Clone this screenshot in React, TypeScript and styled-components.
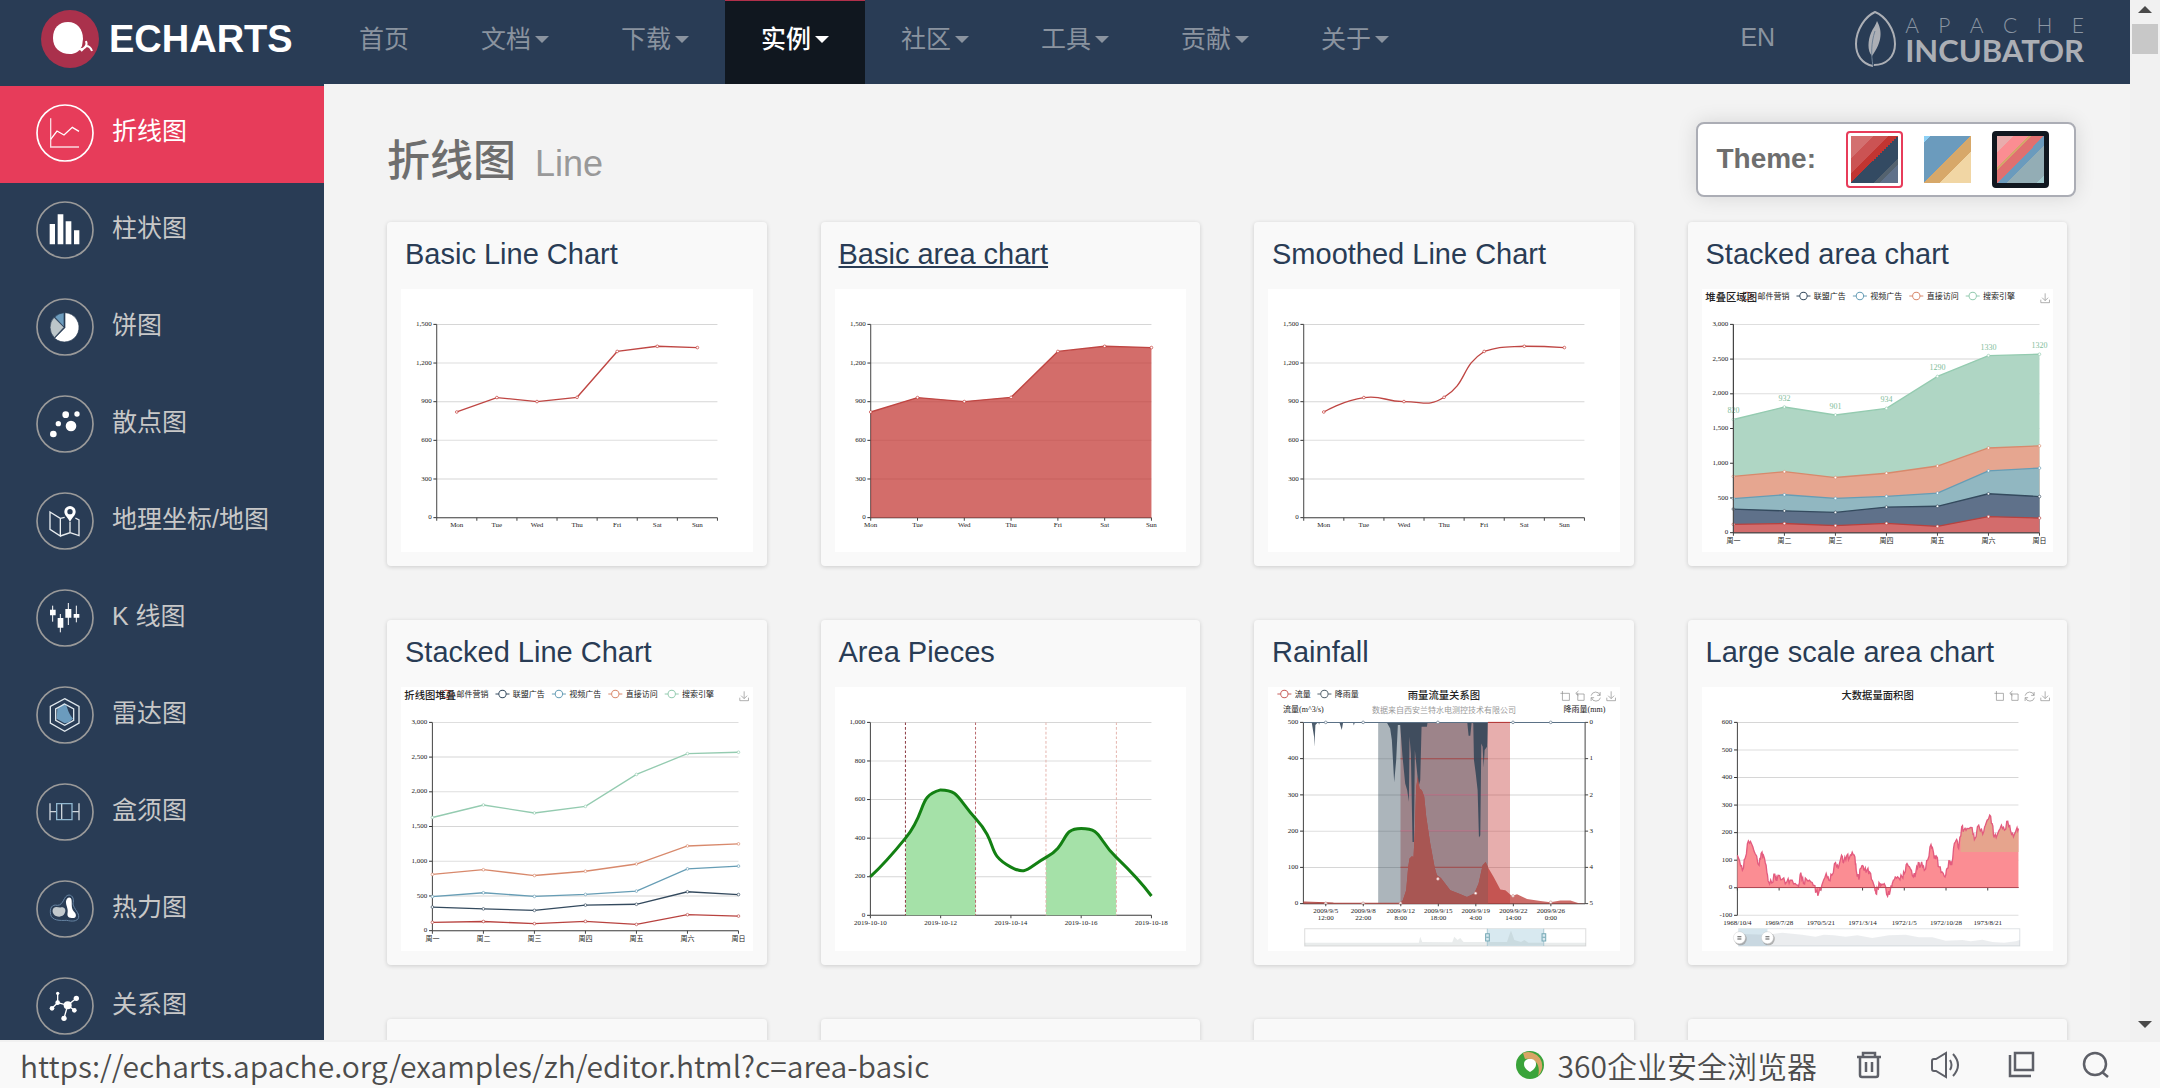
import React from 'react';
import styled, { createGlobalStyle } from 'styled-components';

const SANS = '"Liberation Sans", "Noto Sans CJK SC", sans-serif';
const SERIF = '"Liberation Serif", "Noto Sans CJK SC", serif';

const GlobalStyle = createGlobalStyle`
  * { box-sizing: border-box; }
  body { margin: 0; font-family: ${SANS}; background: #f3f3f3; }
  a { color: inherit; text-decoration: none; }
  button { font: inherit; border: 0; padding: 0; background: none; }
  ul { margin: 0; padding: 0; list-style: none; }
`;

/* ---------- page frame ---------- */

const Browser = styled.div`
  display: flex;
  flex-direction: column;
  height: 100vh;
  overflow: hidden;
`;
const Viewport = styled.div`
  display: flex;
  flex: 1;
  min-height: 0;
`;
const Site = styled.div`
  display: flex;
  flex: 1;
  flex-direction: column;
  min-width: 0;
`;
const Body = styled.div`
  display: flex;
  flex: 1;
  min-height: 0;
`;

/* ---------- top bar ---------- */

const Header = styled.header`
  display: flex;
  flex: none;
  height: 84px;
  padding: 0 46px 0 41px;
  background: #293c55;
`;
const Logo = styled.a`
  display: flex;
  align-items: center;
  gap: 10px;
  width: 282px;
  padding-bottom: 6px;
  color: #fff;
  font: 700 38px/44px "Liberation Sans", sans-serif;
`;
const Nav = styled.nav`
  display: flex;
  flex: 1;
`;
const NavLink = styled.a<{ $active?: boolean }>`
  display: flex;
  align-items: center;
  gap: 4px;
  padding: 0 36px 11px;
  border-top: 1px solid ${p => (p.$active ? '#b0304a' : 'transparent')};
  background: ${p => (p.$active ? '#10171f' : 'transparent')};
  color: ${p => (p.$active ? '#fff' : '#8a939f')};
  font-size: 25px;
  font-weight: ${p => (p.$active ? 500 : 400)};
`;
const Caret = styled.span`
  border: 7px solid transparent;
  border-top-color: currentColor;
  border-bottom: 0;
  margin-top: 5px;
`;
const Incubator = styled.a`
  display: flex;
  align-items: center;
  gap: 9px;
  margin-left: 44px;
  padding-bottom: 6px;
  color: #acafb5;
  font-family: Lato, sans-serif;
`;
const IncubatorWords = styled.span`
  display: flex;
  flex-direction: column;
  font: 700 31px/28px Lato, sans-serif;
`;
const Tracked = styled.span`
  display: flex;
  justify-content: space-between;
  color: #8b96a3;
  font: 300 21px/22px Lato, sans-serif;
`;

/* ---------- side bar ---------- */

const Sidebar = styled.aside`
  flex: none;
  width: 324px;
  padding-top: 2px;
  overflow: hidden;
  background: #293c55;
`;
const SideLink = styled.a<{ $active?: boolean }>`
  display: flex;
  align-items: center;
  gap: 18px;
  height: 97px;
  padding: 0 36px 4px;
  background: ${p => (p.$active ? '#e73c5a' : 'transparent')};
  color: ${p => (p.$active ? '#fff' : '#c8c8c8')};
  font-size: 25px;
  line-height: 30px;
`;
const SideLabel = styled.span`
  padding-bottom: 3px;
`;

/* ---------- gallery ---------- */

const Main = styled.main`
  flex: 1;
  min-width: 0;
  padding: 38px 63px 0;
  overflow: hidden;
  background: #f3f3f3;
`;
const TitleRow = styled.div`
  display: flex;
  align-items: center;
  justify-content: space-between;
  margin: 0 -9px 25px 0;
`;
const Title = styled.h1`
  display: flex;
  align-items: baseline;
  gap: 19px;
  margin: 0;
  padding-top: 6px;
  color: #6e6e6e;
  font-size: 43px;
  font-weight: 500;
  line-height: 60px;
`;
const SubTitle = styled.small`
  color: #999;
  font-size: 36px;
  font-weight: 400;
`;
const ThemePanel = styled.div`
  display: flex;
  align-items: center;
  gap: 16px;
  height: 75px;
  padding: 0 25px 0 18px;
  border: 2px solid #abadb5;
  border-radius: 8px;
  background: #fff;
  box-shadow: 0 0 20px rgba(0, 0, 0, 0.12);
`;
const ThemeLabel = styled.span`
  margin-right: 14px;
  padding-bottom: 2px;
  color: #6e6e6e;
  font-size: 28px;
  font-weight: 700;
`;
const Swatch = styled.button<{ $stops: string; $ring: string; $pad: string }>`
  width: 57px;
  height: 57px;
  padding: 3px;
  border: 2px solid ${p => p.$ring};
  border-radius: 4px;
  background: ${p => p.$pad};
  &::before {
    content: '';
    display: block;
    height: 100%;
    background: linear-gradient(to bottom right, ${p => p.$stops});
  }
`;
const Grid = styled.div`
  display: grid;
  grid-template-columns: repeat(4, minmax(0, 1fr));
  gap: 54px;
`;
const Card = styled.a`
  display: block;
  min-height: 344px;
  padding: 14px;
  border-radius: 4px;
  background: #f9f9f9;
  box-shadow: 0 1px 4px rgba(0, 0, 0, 0.16);
  color: #293c55;
`;
const CardTitle = styled.h4<{ $underlined?: boolean }>`
  margin: 0 4px 17px;
  font-size: 29px;
  font-weight: 400;
  line-height: 36px;
  text-decoration: ${p => (p.$underlined ? 'underline' : 'none')};
`;
const Thumb = styled.svg`
  display: block;
  width: 100%;
  background: #fff;
  font-family: ${SERIF};
  fill: #222;
`;

/* ---------- browser chrome ---------- */

const Scrollbar = styled.div`
  display: flex;
  flex: none;
  flex-direction: column;
  align-items: center;
  width: 30px;
  padding: 6px 0 12px;
  background: #f1f1f1;
`;
const Arrow = styled.span<{ $down?: boolean }>`
  border: 7px solid transparent;
  ${p => (p.$down ? 'border-top-color: #4a4a4a; border-bottom: 0; margin-top: auto;' : 'border-bottom-color: #4a4a4a; border-top: 0;')}
`;
const ScrollThumb = styled.span`
  width: 26px;
  height: 30px;
  margin-top: 11px;
  background: #c8c8c8;
`;
const StatusBar = styled.footer`
  display: flex;
  flex: none;
  align-items: center;
  height: 48px;
  padding: 0 50px 0 20px;
  border-top: 2px solid #f1f1f1;
  background: #f9f9f9;
  color: #4c4c4c;
  font: 400 30px/44px "Noto Sans CJK SC", sans-serif;
  font-weight: 350;
`;
const StatusUrl = styled.span`
  flex: 1;
`;
const BrandName = styled.span`
  margin: 0 38px 0 14px;
`;
const ToolGroup = styled.div`
  display: flex;
  gap: 47px;
`;
const ToolButton = styled.button`
  display: flex;
  color: #5e6068;
`;

/* ---------- drawings: side bar icons ---------- */

const icons: Record<string, React.ReactNode> = {
  line: (
    <g fill="none" stroke="#fff" strokeWidth="4">
      <path d="M44 43V129H129" opacity=".8" />
      <path d="M44 106 63 81 84 93 109 70 129 82" />
    </g>
  ),
  bar: <path fill="#fff" d="M41 69h16v61H41zM65 40h17v90H65zM89 61h17v69H89zM114 88h16v42h-16z" />,
  pie: (
    <g stroke="#293c55" strokeWidth="2">
      <path fill="#fff" d="M87 89V44A44 44 0 1 1 56 121Z" />
      <path fill="#bcc6ca" d="M84 88 55 119A44 44 0 0 1 54 58Z" />
      <path fill="#6b9bbd" d="M84 87 56 57A44 44 0 0 1 84 44Z" />
    </g>
  ),
  scatter: (
    <g fill="#fff">
      <circle cx="89" cy="59" r="10" />
      <circle cx="123" cy="57" r="8" />
      <circle cx="67" cy="86" r="8" />
      <circle cx="105" cy="93" r="16" />
      <circle cx="52" cy="117" r="10" />
    </g>
  ),
  map: (
    <g fill="none" stroke="#e8ecef" strokeWidth="4">
      <path d="M42 60 73 79V132L42 112ZM73 79 86 76M73 132 102 122V90M102 122 129 131V84L118 78" />
      <path fill="#fff" fillRule="evenodd" stroke="none" d="M102 90C96 76 85 70 85 59a17 17 0 0 1 34 0c0 11-11 17-17 31ZM102 51a8 8 0 1 0 0 16 8 8 0 0 0 0-16Z" />
    </g>
  ),
  k: (
    <g stroke="#fff" strokeWidth="3" fill="#fff">
      <path d="M50 50V98M73 75V130M97 42V108M121 50V100" />
      <path stroke="none" d="M42 62h17v17H42zM65 87h17v29H65zM88 60h18v26H88zM113 75h17v11h-17z" />
    </g>
  ),
  radar: (
    <g fill="none" stroke="#dfe7ec" strokeWidth="4">
      <path stroke="none" fill="#6b9bbd" d="M84 52C96 56 92 78 111 98L99 109 86 112 62 98 64 68Z" />
      <path d="M86 38 129 61V111L86 136 43 111V61ZM86 54 113 69V103L86 118 59 103V69Z" />
    </g>
  ),
  box: (
    <g fill="none" stroke="#cfd6dc" strokeWidth="4">
      <path d="M42 61V112M129 61V112M42 86H62M108 86H129M77 62V110" />
      <path stroke="#8fb6cf" d="M62 62H108V110H62Z" />
    </g>
  ),
  heat: (
    <g>
      <path fill="none" stroke="#6684a3" strokeWidth="3" d="M99 45C112 46 114 60 111 72 114 88 130 98 128 112 124 126 106 124 92 121 72 122 48 122 44 104 40 84 48 72 64 76 84 76 82 46 99 45Z" />
      <path fill="#c2c9cd" d="M53 84c7-6 16 0 24-2 10 0 14 8 9 18-4 10-16 12-26 8-9-4-14-16-7-24Z" />
      <path fill="#fff" d="M90 64c2-14 16-16 17-2 1 16-2 24 10 36 6 10 2 18-10 16-12-1-14-6-12-18 2-10-6-20-5-32Z" />
    </g>
  ),
  graph: (
    <g fill="#fff" stroke="#fff" strokeWidth="4">
      <path d="M65 49V77L48 94M65 77 95 85 121 64M115 100 95 85 84 124" fill="none" />
      <g stroke="none">
        <circle cx="65" cy="49" r="5" />
        <circle cx="65" cy="77" r="7" />
        <circle cx="48" cy="94" r="7" />
        <circle cx="95" cy="85" r="12" />
        <circle cx="121" cy="64" r="8" />
        <circle cx="115" cy="100" r="7" />
        <circle cx="84" cy="124" r="8" />
      </g>
    </g>
  ),
};

const SideIcon = ({ name, active }: { name: string; active?: boolean }) => (
  <svg width="58" height="58" viewBox="0 0 174 174">
    <circle cx="87" cy="87" r="84" fill="none" stroke={active ? '#fff' : '#9a9a9a'} strokeWidth="5" />
    {icons[name]}
  </svg>
);

/* ---------- drawings: thumbnails ---------- */

type Pt = [number, number];
const toPath = (pts: Pt[]) => 'M' + pts.map(p => p.join(' ')).join('L');

function smoothPath(pts: Pt[], k: number) {
  const ys = pts.map(p => p[1]);
  const lo = Math.min(...ys);
  const hi = Math.max(...ys);
  const clamp = (y: number) => Math.max(lo, Math.min(hi, y));
  const dist = (a: Pt, b: Pt) => Math.hypot(a[0] - b[0], a[1] - b[1]);
  let out = `M${pts[0].join(' ')}`;
  let before: Pt = pts[0];
  for (let i = 1; i < pts.length; i++) {
    const p = pts[i];
    const next = pts[i + 1];
    let enter: Pt = p;
    let leave: Pt = p;
    if (next) {
      const prev = pts[i - 1];
      const d0 = dist(prev, p);
      const d1 = dist(p, next);
      const v: Pt = [(next[0] - prev[0]) * k, (next[1] - prev[1]) * k];
      const r = d1 / (d0 + d1);
      enter = [p[0] - v[0] * (1 - r), clamp(p[1] - v[1] * (1 - r))];
      leave = [p[0] + v[0] * r, clamp(p[1] + v[1] * r)];
    }
    out += `C${before.join(' ')} ${enter.join(' ')} ${p.join(' ')}`;
    before = leave;
  }
  return out;
}

interface AxesProps {
  x0: number;
  x1: number;
  bottom: number;
  yLabels: string[];
  xLabels: string[];
  band?: boolean;
  labelY?: number;
  step?: number;
  xAxisY?: number;
}
const Axes = ({ x0, x1, bottom, yLabels, xLabels, band, labelY, step, xAxisY }: AxesProps) => {
  const top = 106;
  const dy = (bottom - top) / (yLabels.length - 1);
  const dx = step || (x1 - x0) / (band ? xLabels.length : xLabels.length - 1);
  const ay = xAxisY || bottom;
  const ticks = band ? xLabels.length + 1 : xLabels.length;
  return (
    <g fontSize="21">
      {yLabels.map((t, i) => (
        <g key={t}>
          <path d={`M${x0} ${bottom - i * dy}H${x1}`} stroke={i % 2 ? '#d6d6d6' : '#dedede'} strokeWidth="3" />
          <path d={`M${x0 - 10} ${bottom - i * dy}H${x0}`} stroke="#333" strokeWidth="3" />
          <text x={x0 - 15} y={bottom - i * dy + 5} textAnchor="end">{t}</text>
        </g>
      ))}
      <path d={`M${x0} ${top}V${bottom}M${x0} ${ay}H${x1}`} stroke="#444" strokeWidth="3" fill="none" />
      {Array.from({ length: ticks }, (_, i) => (
        <path key={i} d={`M${x0 + i * dx} ${ay}v9`} stroke="#444" strokeWidth="3" />
      ))}
      {xLabels.map((t, i) => (
        <text key={i} x={x0 + (i + (band ? 0.5 : 0)) * dx} y={labelY || bottom + 29} textAnchor="middle">{t}</text>
      ))}
    </g>
  );
};

const Dots = ({ pts, color }: { pts: Pt[]; color: string }) => (
  <g fill="#fff" stroke={color} strokeWidth="2">
    {pts.map((p, i) => <circle key={i} cx={p[0]} cy={p[1]} r="4" />)}
  </g>
);

const WEEK = ['Mon', 'Tue', 'Wed', 'Thu', 'Fri', 'Sat', 'Sun'];
const WEEK_ZH = ['周一', '周二', '周三', '周四', '周五', '周六', '周日'];
const VISITS = [820, 932, 901, 934, 1290, 1330, 1320];
const VISIT_AXIS = ['0', '300', '600', '900', '1,200', '1,500'];

const WeekChart = ({ kind }: { kind: 'line' | 'area' | 'smooth' }) => {
  const area = kind === 'area';
  const dx = 841 / (area ? 6 : 7);
  const pts = VISITS.map((v, i): Pt => [107 + dx * (i + (area ? 0 : 0.5)), 685 - (579 * v) / 1500]);
  return (
    <Thumb viewBox="0 0 1053 789">
      <Axes x0={107} x1={948} bottom={685} yLabels={VISIT_AXIS} xLabels={WEEK} band={!area} />
      {area && <path d={`${toPath(pts)}L948 685H107Z`} fill="#c23531" opacity=".72" />}
      <path d={kind === 'smooth' ? smoothPath(pts, 0.5) : toPath(pts)} fill="none" stroke="#bf4643" strokeWidth="4" />
      <Dots pts={pts} color="#c23531" />
    </Thumb>
  );
};

const Download = () => (
  <path d="M1028 13V34M1019 26 1028 35 1037 26M1015 32V41H1041V32" fill="none" stroke="#888" strokeWidth="2" />
);
const Toolbox = () => (
  <g fill="none" stroke="#888" strokeWidth="2">
    <path d="M882 12V40H903V19H876M928 19V40H947V21H924M930 12 922 19 930 26" />
    <path d="M968 26A14 14 0 0 1 995 25M996 32A14 14 0 0 1 969 32M995 15V25H986M968 42V32H977" />
    <Download />
  </g>
);
const LegendItem = ({ x, label, color }: { x: number; label: string; color: string }) => (
  <g>
    <path d={`M${x - 21} 21H${x + 21}`} stroke={color} strokeWidth="3" />
    <circle cx={x} cy="21" r="11" fill="#fff" stroke={color} strokeWidth="3" />
    <text x={x + 31} y="30" fontSize="24">{label}</text>
  </g>
);

const SERIES = [
  { name: '邮件营销', data: [120, 132, 101, 134, 90, 230, 210], line: '#b8423f', fill: '#d36c6c' },
  { name: '联盟广告', data: [220, 182, 191, 234, 290, 330, 310], line: '#344a5e', fill: '#5f718a' },
  { name: '视频广告', data: [150, 232, 201, 154, 190, 330, 410], line: '#669db5', fill: '#91b7c1' },
  { name: '直接访问', data: [320, 332, 301, 334, 390, 330, 320], line: '#d8896c', fill: '#e6a690' },
  { name: '搜索引擎', data: VISITS, line: '#94cbb0', fill: '#afd6c4' },
];

const StackChart = ({ filled, title }: { filled?: boolean; title: string }) => {
  const base = WEEK_ZH.map(() => 0);
  const layers = SERIES.map(s => {
    s.data.forEach((v, i) => { base[i] += v; });
    return { ...s, pts: base.map((v, i): Pt => [94 + (917 / 6) * i, 730 - (624 * v) / 3000]) };
  });
  return (
    <Thumb viewBox="0 0 1053 789">
      <Axes x0={94} x1={1011} bottom={730} labelY={761} yLabels={['0', '500', '1,000', '1,500', '2,000', '2,500', '3,000']} xLabels={WEEK_ZH} />
      {[...layers].reverse().map(l => (
        <g key={l.name}>
          {filled && <path d={`${toPath(l.pts)}L1011 730H94Z`} fill={l.fill} />}
          <path d={toPath(l.pts)} fill="none" stroke={l.line} strokeWidth="4" />
          <Dots pts={l.pts} color={l.line} />
        </g>
      ))}
      {filled && layers[4].pts.map((p, i) => (
        <text key={i} x={p[0]} y={p[1] - 18} fontSize="24" fill="#7fbd9b" textAnchor="middle">{VISITS[i]}</text>
      ))}
      {filled && <path d="M94 106V730H1011" fill="none" stroke="#444" strokeWidth="3" />}
      {layers.map((l, i) => <LegendItem key={l.name} x={135 + 169 * i} label={l.name} color={l.line} />)}
      <text x="10" y="35" fontSize="31" fontWeight="500">{title}</text>
      <Download />
    </Thumb>
  );
};

const PiecesChart = () => {
  const pts = [200, 400, 650, 500, 250, 300, 450, 300, 100].map((v, i): Pt => [106 + 105.25 * i, 684 - 0.578 * v]);
  const curve = smoothPath(pts, 0.6);
  return (
    <Thumb viewBox="0 0 1053 789">
      <clipPath id="pieces"><path d="M211 100h210v600H211zM632 100h211v600H632z" /></clipPath>
      <Axes x0={106} x1={948} bottom={684} yLabels={['0', '200', '400', '600', '800', '1,000']} xLabels={['2019-10-10', '2019-10-12', '2019-10-14', '2019-10-16', '2019-10-18']} />
      <path d={`${curve}V684H106Z`} fill="#a5e1a8" clipPath="url(#pieces)" />
      {[['211', '#8c3a42'], ['421', '#b9686c'], ['632', '#e5b5ae'], ['843', '#e5b5ae']].map(([x, c]) => (
        <path key={x} d={`M${x} 106V684`} stroke={c} strokeWidth="3" strokeDasharray="8 6" />
      ))}
      <path d={curve} fill="none" stroke="#138013" strokeWidth="9" />
    </Thumb>
  );
};

const RAIN_TIMES = [['2009/9/5', '12:00'], ['2009/9/8', '22:00'], ['2009/9/12', '8:00'], ['2009/9/15', '18:00'], ['2009/9/19', '4:00'], ['2009/9/22', '14:00'], ['2009/9/26', '0:00']];
const FLOW = 'M106 644 196 647 396 648 404 639 414 609 420 539 424 514 431 507 436 509 440 429 444 299 449 269 454 304 461 309 468 329 474 389 486 469 499 539 506 564 518 572 546 609 571 619 596 629 618 619 631 589 643 534 652 524 661 544 676 569 696 607 711 609 731 626 746 621 776 635 816 641 846 645 876 640 906 640 931 648 950 649H106Z';

const RainChart = () => (
  <Thumb viewBox="0 0 1053 789">
    <clipPath id="overlap"><path d="M397 106H659V649H397Z" /></clipPath>
    <Axes x0={106} x1={950} bottom={649} yLabels={['0', '100', '200', '300', '400', '500']} xLabels={[]} />
    <path d="M397 106H725V649H397Z" fill="#c23531" opacity=".4" />
    <path d="M330 106H659V649H330Z" fill="#2f4554" opacity=".4" />
    <path d="M397 215H659M397 540H659" stroke="#a54b4b" strokeWidth="3" />
    <path d="M397 323H659M397 431H659" stroke="#cf6f8c" strokeWidth="2" />
    <path d={FLOW} fill="#b9332f" opacity=".72" />
    <g transform="translate(-54 -231)" fill="#344658" opacity=".88">
      <path d="M185 337 192 380 193 410 196 345 203 337ZM205 337 207 344 209 337ZM268 337 275 360 279 337ZM309 337 311 346 314 337Z" />
      <path d="M410 337 420 355 425 390 432 516 438 450 443 345 450 345 457 440 465 520 471 540 476 575 478 380 482 430 487 695 491 695 494 420 500 480 505 530 510 510 514 350 530 350 532 337Z" />
      <path d="M651 337 655 377 660 377 664 337 669 340 671 450 676 487 682 540 686 682 690 675 693 400 697 410 700 472 703 420 710 410 712 337Z" />
    </g>
    <path d={FLOW} fill="#a85653" clipPath="url(#overlap)" />
    <path d="M106 644 196 647 396 648" fill="none" stroke="#b4504c" strokeWidth="3" />
    <path d="M106 106H950" stroke="#5b7186" strokeWidth="3" />
    <path d="M659 106H725" stroke="#c23531" strokeWidth="3" />
    <path d="M950 106V649" stroke="#444" strokeWidth="3" />
    <Dots pts={[[173, 106], [285, 106], [509, 106], [734, 106], [847, 106]]} color="#5b7186" />
    <Dots pts={[[173, 648], [285, 648], [397, 648], [622, 618], [734, 626], [847, 645], [509, 575]]} color="#c98a86" />
    <g fontSize="21">
      {['0', '1', '2', '3', '4', '5'].map((t, i) => (
        <g key={t}>
          <path d={`M950 ${106 + i * 108.6}h9`} stroke="#444" strokeWidth="3" />
          <text x="963" y={111 + i * 108.6}>{t}</text>
        </g>
      ))}
      {RAIN_TIMES.map(([day, hour], i) => (
        <g key={day} textAnchor="middle">
          <path d={`M${173 + i * 112.4} 649v8`} stroke="#444" strokeWidth="3" />
          <text x={173 + i * 112.4} y="678">{day}</text>
          <text x={173 + i * 112.4} y="699">{hour}</text>
        </g>
      ))}
    </g>
    <LegendItem x={49} label="流量" color="#c8605c" />
    <LegendItem x={169} label="降雨量" color="#56646f" />
    <g textAnchor="middle" fontSize="24">
      <text x="527" y="35" fontSize="31" fontWeight="500">雨量流量关系图</text>
      <text x="527" y="78" fill="#999">数据来自西安兰特水电测控技术有限公司</text>
      <text x="106" y="75">流量(m^3/s)</text>
      <text x="948" y="75">降雨量(mm)</text>
    </g>
    <Toolbox />
    <path d="M110 724H952V776H110Z" fill="#fff" stroke="#ddd" strokeWidth="3" />
    <path d="M657 724H826V776H657Z" fill="#d8e9f0" />
    <path d="M110 766H452L456 748 462 764 552 765 558 748 568 758 576 752 586 764H716L724 740 728 730 738 758 758 764 768 758 780 766H952V775H110Z" fill="#9aa" opacity=".22" />
    <path d="M657 724V776M826 724V776" stroke="#a9c9d3" strokeWidth="3" />
    <path d="M652 739h11v22h-11zM821 739h11v22h-11zM654 750h7M823 750h7" fill="#d8e9f0" stroke="#74a8b4" strokeWidth="3" />
  </Thumb>
);

/* Anchor values of the random walk; short wiggles are added between them. */
const WALK = [106, 504, 112, 519, 121, 549, 129, 514, 139, 461, 148, 469, 159, 499, 171, 534, 177, 499, 184, 504, 192, 534, 198, 581, 209, 587, 218, 561, 224, 581, 228, 564, 239, 577, 254, 584, 264, 579, 279, 589, 289, 597, 296, 556, 304, 589, 312, 575, 326, 584, 336, 594, 342, 614, 349, 619, 359, 594, 372, 559, 380, 579, 389, 564, 400, 526, 408, 544, 418, 504, 424, 526, 434, 504, 441, 514, 450, 495, 458, 509, 462, 549, 470, 577, 474, 544, 481, 535, 486, 549, 494, 549, 502, 554, 510, 579, 517, 599, 521, 619, 526, 604, 532, 589, 537, 594, 546, 589, 556, 627, 564, 609, 570, 589, 579, 569, 589, 572, 599, 569, 606, 559, 614, 529, 624, 544, 633, 569, 640, 559, 648, 526, 654, 539, 658, 524, 666, 549, 676, 519, 686, 472, 692, 489, 696, 514, 702, 507, 710, 539, 719, 554, 728, 569, 734, 544, 742, 521, 748, 534, 756, 469, 763, 457, 769, 484, 778, 419, 784, 429, 794, 424, 809, 421, 816, 457, 829, 414, 841, 441, 849, 414, 862, 384, 869, 409, 875, 449, 884, 444, 897, 414, 906, 429, 916, 402, 924, 429, 933, 449, 941, 429, 948, 424];

const walkPoints = (): Pt[] => {
  const out: Pt[] = [];
  for (let i = 0; i < WALK.length; i += 2) {
    const x = WALK[i];
    const y = WALK[i + 1];
    out.push([x, y]);
    if (i + 3 < WALK.length) {
      const nx = WALK[i + 2];
      const ny = WALK[i + 3];
      const j = 8 * Math.sin(i * 12.9);
      out.push([x + (nx - x) * 0.4, y + (ny - y) * 0.4 + j]);
      out.push([x + (nx - x) * 0.7, y + (ny - y) * 0.7 - j]);
    }
  }
  return out;
};

const LargeChart = () => {
  const path = toPath(walkPoints());
  return (
    <Thumb viewBox="0 0 1053 789">
      <clipPath id="peaks"><path d="M775 300h180v194H775z" /></clipPath>
      <Axes x0={106} x1={948} bottom={684} step={125} labelY={713} xAxisY={601} yLabels={['-100', '0', '100', '200', '300', '400', '500', '600']} xLabels={['1968/10/4', '1969/7/28', '1970/5/21', '1971/3/14', '1972/1/5', '1972/10/28', '1973/8/21']} />
      <path d={`${path}V601H106Z`} fill="#fb8d93" />
      <path d={`${path}V601H106Z`} fill="#e6a48d" clipPath="url(#peaks)" />
      <path d={path} fill="none" stroke="#e35b7e" strokeWidth="4" />
      <path d="M106 601H948" stroke="#b24a55" strokeWidth="3" />
      <text x="526" y="35" fontSize="31" fontWeight="500" textAnchor="middle">大数据量面积图</text>
      <Toolbox />
      <path d="M110 724H952V776H110Z" fill="#fff" stroke="#dfe3e6" strokeWidth="3" />
      <path d="M110 724H196V776H110Z" fill="#d6e6ee" />
      <path d="M110 740 196 742 240 736 300 742 340 748 365 742 395 744 430 748 465 744 510 752 560 744 610 742 650 750 690 750 730 760 780 758 805 762 840 757 870 764 905 766 940 762 952 758V776H110Z" fill="#8a95a3" opacity=".17" />
      {[112, 196].map(x => (
        <g key={x}>
          <circle cx={x + 3} cy="755" r="19" fill="#999" opacity=".7" />
          <circle cx={x} cy="751" r="18" fill="#fff" stroke="#bbb" strokeWidth="1" />
          <path d={`M${x - 6} 748h12M${x - 6} 755h12`} stroke="#555" strokeWidth="3" />
        </g>
      ))}
    </Thumb>
  );
};

/* ---------- page data ---------- */

const NAV = [['首页', false], ['文档', true], ['下载', true], ['实例', true], ['社区', true], ['工具', true], ['贡献', true], ['关于', true]] as const;
const SIDE = [['line', '折线图'], ['bar', '柱状图'], ['pie', '饼图'], ['scatter', '散点图'], ['map', '地理坐标/地图'], ['k', 'K 线图'], ['radar', '雷达图'], ['box', '盒须图'], ['heat', '热力图'], ['graph', '关系图']];
const CARDS: [string, React.ReactNode][] = [
  ['Basic Line Chart', <WeekChart kind="line" />],
  ['Basic area chart', <WeekChart kind="area" />],
  ['Smoothed Line Chart', <WeekChart kind="smooth" />],
  ['Stacked area chart', <StackChart filled title="堆叠区域图" />],
  ['Stacked Line Chart', <StackChart title="折线图堆叠" />],
  ['Area Pieces', <PiecesChart />],
  ['Rainfall', <RainChart />],
  ['Large scale area chart', <LargeChart />],
];
const THEMES = [
  { ring: '#e73c5a', pad: '#fff', stops: '#d37070 0 24%, #cb5353 24% 40%, #c23531 40% 50%, #334a62 50% 74%, #54626f 74% 80%, #5f718a 80%' },
  { ring: '#fff', pad: '#fff', stops: '#8cd0f5 0 7%, #6b9bbd 7% 50%, #d7a869 50% 67%, #f1d6a4 67%' },
  { ring: '#10171f', pad: '#10171f', stops: '#e9acac 0 18%, #fb8d92 18% 34%, #d4a46b 34% 37%, #e07070 37% 50%, #6b9bbd 50% 60%, #93adb5 60% 92%, #a0c8cc 92%' },
];

export default function App() {
  return (
    <Browser>
      <GlobalStyle />
      <Viewport>
        <Site>
          <Header>
            <Logo href="#">
              <svg width="58" height="58" viewBox="0 0 58 58">
                <circle cx="29" cy="29" r="29" fill="#aa314c" />
                <path fill="#fff" d="M27 12c9 0 15 7 15 17l-1 7c-3 6-7 8-12 8-10 0-17-6-17-16S18 12 27 12Z" />
                <path fill="none" stroke="#fff" strokeWidth="2" d="M38 39C43 40 47 36 45 31M45 36C48 36 50 38 51 41M40 41 45 36" />
              </svg>
              ECHARTS
            </Logo>
            <Nav>
              {NAV.map(([label, menu]) => (
                <NavLink key={label} href="#" $active={label === '实例'}>
                  {label}
                  {menu && <Caret />}
                </NavLink>
              ))}
            </Nav>
            <NavLink href="#">EN</NavLink>
            <Incubator href="#">
              <svg width="41" height="56" viewBox="0 0 41 56" fill="none" stroke="#acafb5">
                <path strokeWidth="2" d="M18 55C7 53 1 44 1 33 1 18 11 5 20 1 30 5 40 18 40 33 40 46 31 54 19 54" />
                <path stroke="none" fill="#acafb5" d="M22 10C27 19 28 30 17 45 12 40 13 29 16 22 18 17 21 14 22 10Z" />
                <path strokeWidth="1" d="M20 20C16 32 16 44 18 55" stroke="#6f8296" />
              </svg>
              <IncubatorWords>
                <Tracked>{'APACHE'.split('').map((c, i) => <span key={i}>{c}</span>)}</Tracked>
                INCUBATOR
              </IncubatorWords>
            </Incubator>
          </Header>
          <Body>
            <Sidebar>
              <ul>
                {SIDE.map(([icon, label], i) => (
                  <li key={icon}>
                    <SideLink href="#" $active={i === 0}>
                      <SideIcon name={icon} active={i === 0} />
                      <SideLabel>{label}</SideLabel>
                    </SideLink>
                  </li>
                ))}
              </ul>
            </Sidebar>
            <Main>
              <TitleRow>
                <Title>折线图<SubTitle>Line</SubTitle></Title>
                <ThemePanel>
                  <ThemeLabel>Theme:</ThemeLabel>
                  {THEMES.map(t => <Swatch key={t.stops} type="button" $ring={t.ring} $pad={t.pad} $stops={t.stops} />)}
                </ThemePanel>
              </TitleRow>
              <Grid>
                {CARDS.map(([title, chart]) => (
                  <Card key={title} href="#">
                    <CardTitle $underlined={title === 'Basic area chart'}>{title}</CardTitle>
                    {chart}
                  </Card>
                ))}
                {[0, 1, 2, 3].map(i => <Card key={i} href="#" />)}
              </Grid>
            </Main>
          </Body>
        </Site>
        <Scrollbar>
          <Arrow />
          <ScrollThumb />
          <Arrow $down />
        </Scrollbar>
      </Viewport>
      <StatusBar>
        <StatusUrl>https://echarts.apache.org/examples/zh/editor.html?c=area-basic</StatusUrl>
        <svg width="28" height="28" viewBox="0 0 28 28">
          <circle cx="14" cy="14" r="14" fill="#3aa33a" />
          <path d="M7 2A14 14 0 0 1 22 25C25 15 20 6 9 8Z" fill="#d9a566" />
          <path d="M14 8c4 0 6 2 6 5 0 4-3 6-6 8-3-2-6-4-6-8 0-3 2-5 6-5Z" fill="#fff" />
        </svg>
        <BrandName>360企业安全浏览器</BrandName>
        <ToolGroup>
          <ToolButton type="button" aria-label="trash">
            <svg width="28" height="28" viewBox="0 0 28 28" fill="none" stroke="currentColor" strokeWidth="2.500">
              <path d="M2 6H26M8 6V2H20V6M5 6V24Q5 26 7 26H21Q23 26 23 24V6M11 11V21M17 11V21" />
            </svg>
          </ToolButton>
          <ToolButton type="button" aria-label="sound">
            <svg width="30" height="28" viewBox="0 0 30 28" fill="none" stroke="currentColor" strokeWidth="2">
              <path d="M16 2V26L6 20H4Q2 20 2 18V10Q2 8 4 8H6ZM20 9Q23 14 20 19M23 3Q33 14 23 25" />
            </svg>
          </ToolButton>
          <ToolButton type="button" aria-label="windows">
            <svg width="28" height="28" viewBox="0 0 28 28" fill="none" stroke="currentColor" strokeWidth="2.500">
              <path d="M8 2H26V19H8ZM3 4V25H24" />
            </svg>
          </ToolButton>
          <ToolButton type="button" aria-label="search">
            <svg width="28" height="28" viewBox="0 0 28 28" fill="none" stroke="currentColor" strokeWidth="2.500">
              <circle cx="13" cy="13" r="11" />
              <path d="M20 21 26 26" />
            </svg>
          </ToolButton>
        </ToolGroup>
      </StatusBar>
    </Browser>
  );
}
